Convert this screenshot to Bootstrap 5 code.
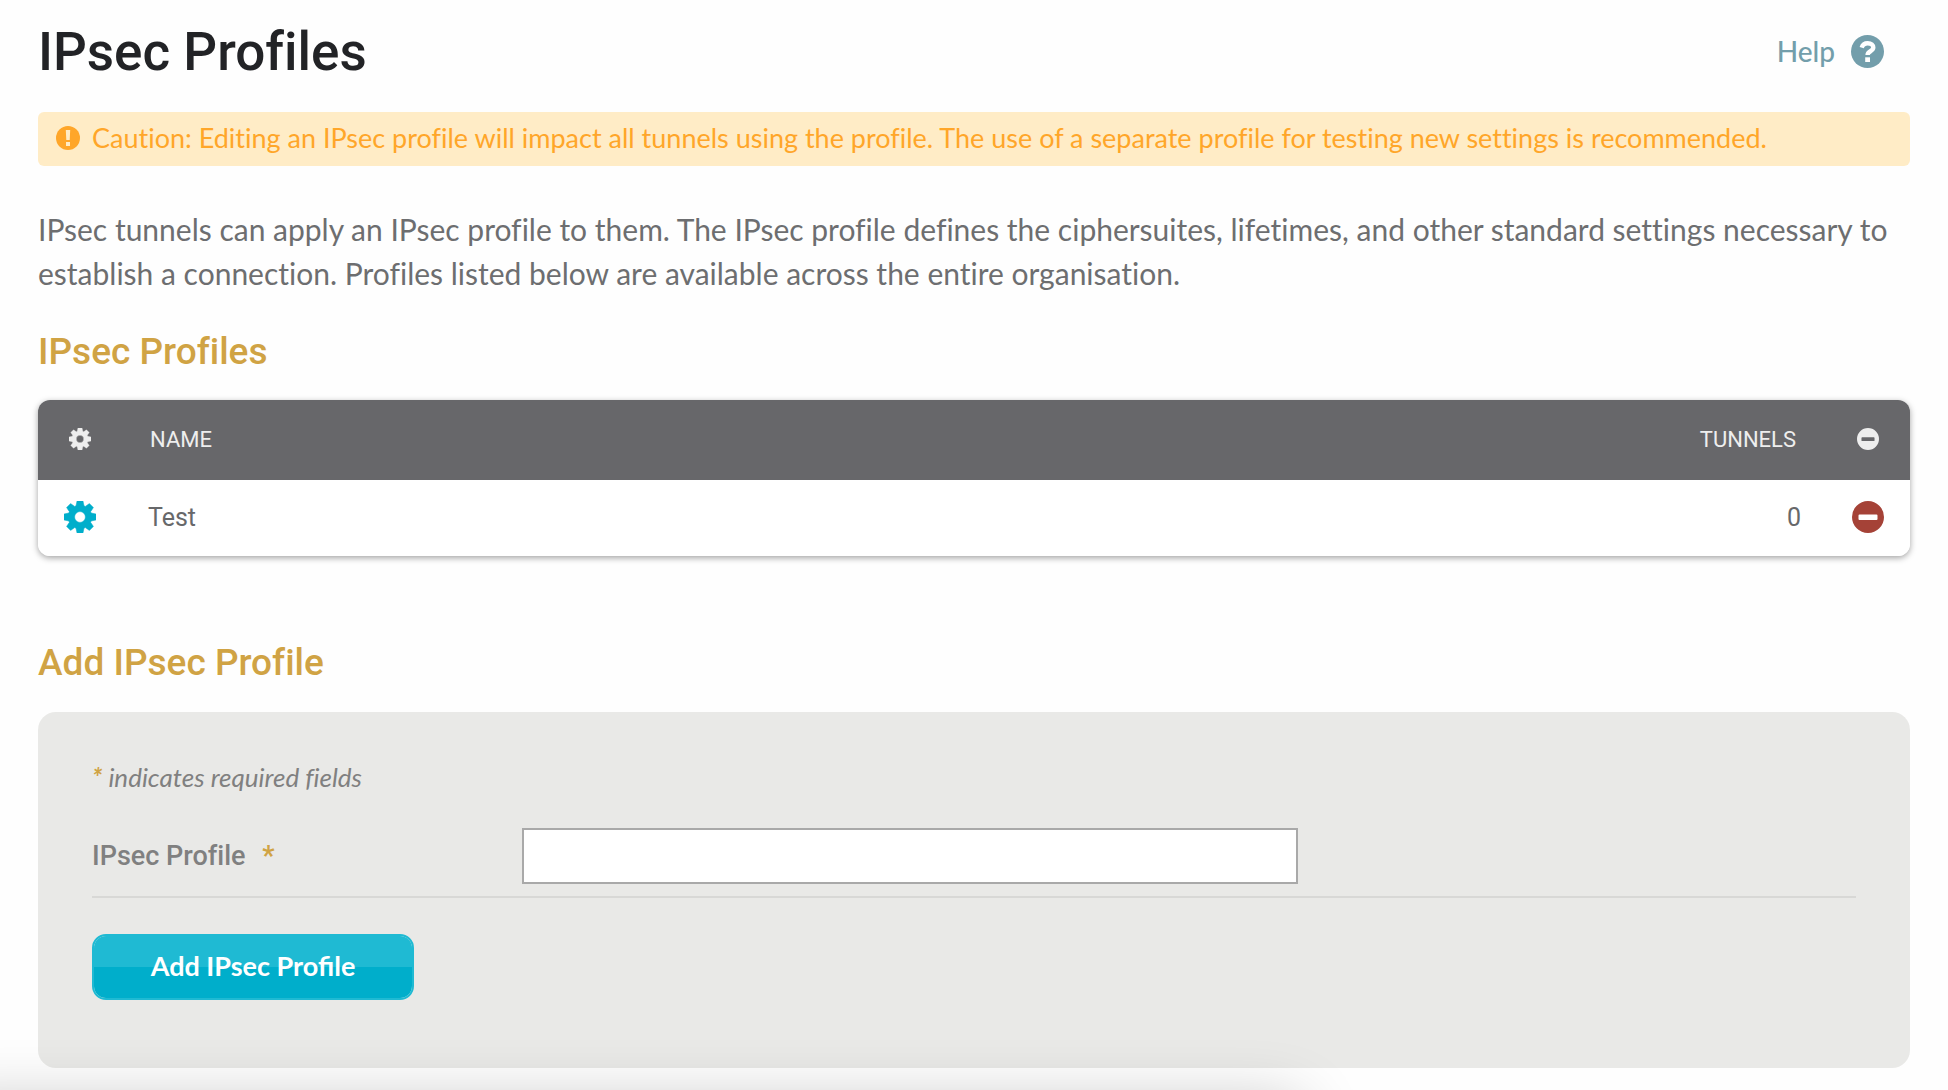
<!DOCTYPE html>
<html lang="en">
<head>
<meta charset="utf-8">
<meta name="viewport" content="width=device-width, initial-scale=1">
<title>IPsec Profiles</title>
<link rel="stylesheet" href="https://cdn.jsdelivr.net/npm/bootstrap@5.3.0/dist/css/bootstrap.min.css">
<style>
  body { font-family: Lato, "Open Sans", sans-serif; font-variant-ligatures: none; font-size: 30px; line-height: 44px; color: #6d6e70; background: #fefefe; overflow-x: hidden; }
  .page-wrap { padding: 20px 38px 22px; }
  .din { font-family: Roboto, "Liberation Sans", sans-serif; }
  .page-title { font-size: 53px; line-height: 64px; font-weight: 500; color: #222326; }
  .section-title { font-size: 37px; line-height: 44px; font-weight: 500; color: #d0a344; }
  .help-link { font-size: 28px; line-height: 32px; font-weight: 500; color: #739eab; gap: 16px; padding: 0 26px 2px 0; }
  .caution { height: 54px; padding: 0 18px 2px; gap: 12px; font-size: 27px; line-height: 32px; color: #ffa629; background: #ffecc6; border-radius: 6px; margin-top: 28px; }
  .intro { margin: 41px 0 35px; }
  .profile-card { border-radius: 12px; overflow: hidden; box-shadow: 0 2px 6px rgba(0,0,0,.36); margin-top: 26px; margin-bottom: 85px; }
  .profile-table { --bs-table-bg: #fff; --bs-table-color: #67686a; margin: 0; table-layout: fixed; font-size: 25px; line-height: 32px; }
  .profile-table th, .profile-table td { border: 0; vertical-align: middle; }
  .profile-table thead th { height: 80px; padding: 0; background: #67676a; color: #eee; font-size: 22px; font-weight: 400; }
  .profile-table tbody td { height: 76px; padding: 0; }
  .profile-table thead th.text-center, .profile-table tbody td.text-center { padding-bottom: 2px; }
  .icon-col { width: 84px; }
  .profile-table .name-head { padding-left: 28px; }
  .profile-table .name-cell { padding-left: 26px; }
  .profile-table .count-head { padding-right: 30px; }
  .profile-table .count-cell { padding-right: 25px; }
  .icon-btn { border: 0; background: none; padding: 0; }
  .form-panel { background: #e9e9e7; border-radius: 18px; padding: 47px 54px 68px; margin-top: 27px; }
  .req-note { font-size: 26px; line-height: 36px; font-style: italic; color: #808080; margin-bottom: 33px; }
  .star { color: #d0a344; font-weight: 700; }
  .field-row { padding-bottom: 12px; border-bottom: 2px solid #d8d8d6; margin-bottom: 36px; }
  .field-label { width: 430px; font-size: 27px; line-height: 32px; font-weight: 500; color: #808080; }
  .field-label .star { margin-left: 10px; }
  .profile-input { width: 44%; height: 56px; font-size: 26px; border: 2px solid #a9a9a9; border-radius: 0; background: #fff; }
  .add-btn { height: 66px; min-width: 322px; padding: 0 0 2px; border: 2px solid #1fbad3; border-radius: 14px; color: #fff; font-size: 27px; line-height: 32px; font-weight: 700; background: linear-gradient(#1fbad3 50%, #00aecb 50%) padding-box; }
  .dock-shadow { position: fixed; left: -60px; top: 100%; width: 1360px; height: 120px; margin-top: 14px; box-shadow: 0 0 64px 0 rgba(0,0,0,.24); pointer-events: none; }
</style>
</head>
<body>
<svg class="d-none" aria-hidden="true">
  <symbol id="gear" viewBox="-16 -16 32 32">
    <path fill-rule="evenodd" d="M-3-16H3L4-11.200 5.300-10.600 9.400-13.400 13.400-9.400 10.600-5.300 11.200-4 16-3V3L11.200 4 10.600 5.300 13.400 9.400 9.400 13.400 5.300 10.600 4 11.200 3 16H-3L-4 11.200-5.300 10.600-9.400 13.400-13.400 9.400-10.600 5.300-11.200 4-16 3V-3L-11.200-4-10.600-5.300-13.400-9.400-9.400-13.400-5.300-10.600-4-11.200ZM0-5.400A5.400 5.400 0 1 0 0 5.400 5.400 5.400 0 1 0 0-5.400Z" fill="currentColor" stroke="currentColor" stroke-width=".5" stroke-linejoin="round"/>
  </symbol>
  <symbol id="minus" viewBox="0 0 32 32">
    <path fill-rule="evenodd" fill="currentColor" d="M16 0A16 16 0 1 1 16 32 16 16 0 1 1 16 0ZM7.500 13.500Q6.500 13.500 6.500 14.500V18Q6.500 19 7.500 19H24.500Q25.500 19 25.500 18V14.500Q25.500 13.500 24.500 13.500Z"/>
  </symbol>
</svg>
<main class="page-wrap">
  <header class="d-flex justify-content-between align-items-center">
    <h1 class="page-title din m-0">IPsec Profiles</h1>
    <a class="help-link d-flex align-items-center text-decoration-none" href="#help">Help
      <svg width="33" height="33" viewBox="0 0 33 33" aria-hidden="true"><circle cx="16.500" cy="16.500" r="16.500" fill="#739eab"/><path d="M10.700 12.600C11.700 9.400 13.700 8.200 16.700 8.200 20.300 8.200 22.300 10.100 22.300 12.600 22.300 16.500 16.600 16 16.600 19.900" fill="none" stroke="#fff" stroke-width="4.400"/><path d="M14.200 22.300H19V27H14.200Z" fill="#fff"/></svg>
    </a>
  </header>
  <div class="caution d-flex align-items-center" role="alert">
    <svg class="flex-shrink-0" width="24" height="24" viewBox="0 0 24 24" aria-hidden="true"><circle cx="12" cy="12" r="12" fill="#ffa629"/><path d="M9.800 4H14.200L13.700 14H10.300ZM10 16H14V20H10Z" fill="#ffecc6"/></svg>
    <span>Caution: Editing an IPsec profile will impact all tunnels using the profile. The use of a separate profile for testing new settings is recommended.</span>
  </div>
  <p class="intro">IPsec tunnels can apply an IPsec profile to them. The IPsec profile defines the ciphersuites, lifetimes, and other standard settings necessary to establish a connection. Profiles listed below are available across the entire organisation.</p>

  <h2 class="section-title din m-0">IPsec Profiles</h2>
  <div class="profile-card">
    <table class="table profile-table din">
      <colgroup><col class="icon-col"><col><col><col class="icon-col"></colgroup>
      <thead>
        <tr>
          <th scope="col" class="text-center" aria-label="Edit"><svg class="d-block mx-auto" width="22" height="22"><use href="#gear"/></svg></th>
          <th scope="col" class="name-head">NAME</th>
          <th scope="col" class="count-head text-end">TUNNELS</th>
          <th scope="col" class="text-center" aria-label="Delete"><svg class="d-block mx-auto" width="22" height="22"><use href="#minus"/></svg></th>
        </tr>
      </thead>
      <tbody>
        <tr>
          <td class="text-center"><button type="button" class="icon-btn d-block mx-auto" aria-label="Edit Test"><svg class="d-block" width="32" height="32" color="#00aecb"><use href="#gear"/></svg></button></td>
          <td class="name-cell">Test</td>
          <td class="count-cell text-end">0</td>
          <td class="text-center"><button type="button" class="icon-btn d-block mx-auto" aria-label="Delete Test"><svg class="d-block" width="32" height="32" color="#a54237"><use href="#minus"/></svg></button></td>
        </tr>
      </tbody>
    </table>
  </div>

  <h2 class="section-title din m-0">Add IPsec Profile</h2>
  <form class="form-panel">
    <p class="req-note"><span class="star">*</span> indicates required fields</p>
    <div class="field-row d-flex align-items-center">
      <label class="field-label din flex-shrink-0" for="profile">IPsec Profile <span class="star">*</span></label>
      <input class="form-control profile-input" type="text" id="profile" required>
    </div>
    <button type="submit" class="btn add-btn">Add IPsec Profile</button>
  </form>
</main>
<div class="dock-shadow" aria-hidden="true"></div>
<script src="https://cdn.jsdelivr.net/npm/bootstrap@5.3.0/dist/js/bootstrap.bundle.min.js"></script>
</body>
</html>
